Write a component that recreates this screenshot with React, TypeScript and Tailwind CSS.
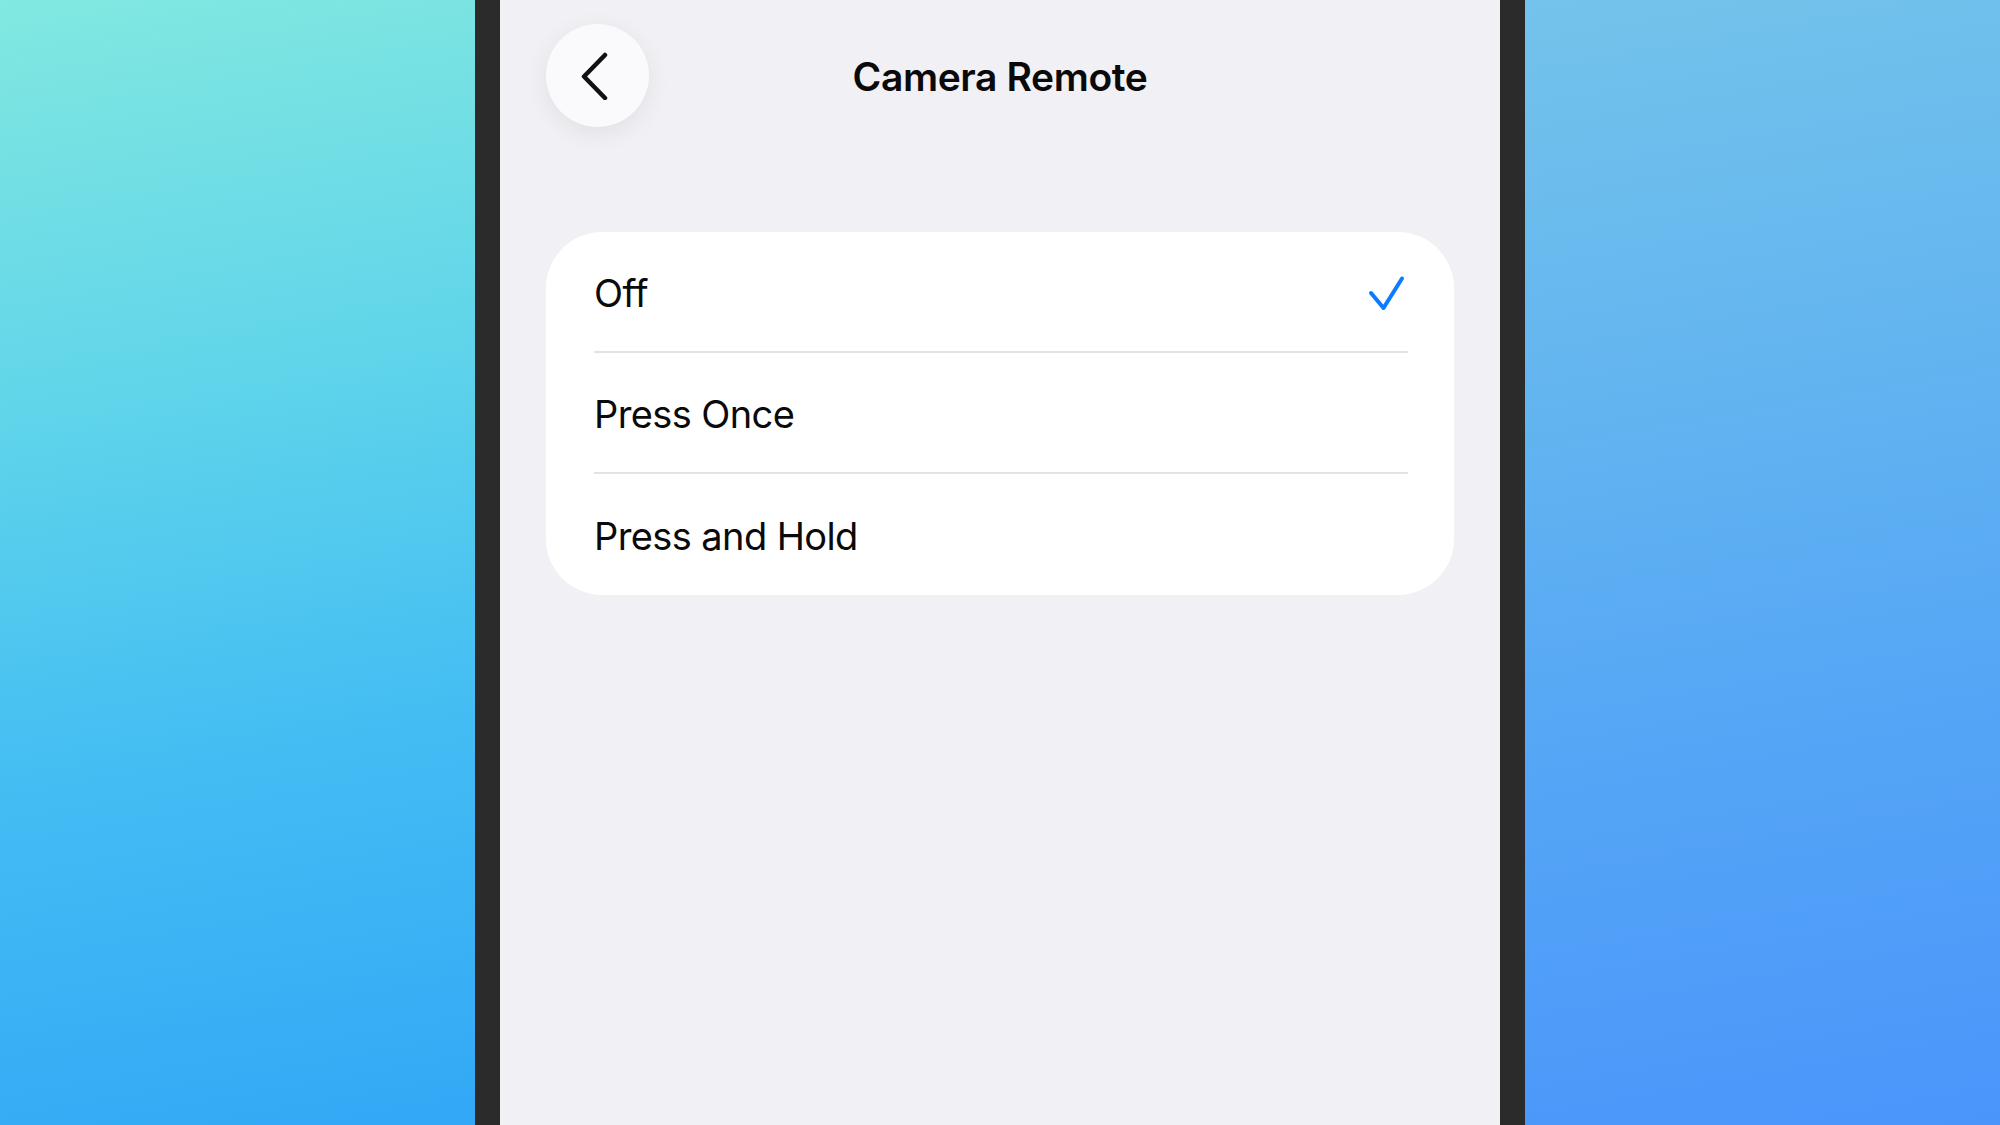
import React from "react";

const options = ["Off", "Press Once", "Press and Hold"];

function BackChevron() {
  return (
    <svg width="32" height="48" viewBox="0 0 32 48" fill="none" className="-ml-2">
      <path
        d="M27 3 L6 24.5 L27 46"
        stroke="#111"
        strokeWidth="4.5"
        strokeLinecap="round"
        strokeLinejoin="round"
      />
    </svg>
  );
}

function Check() {
  return (
    <svg width="40" height="40" viewBox="0 0 40 40" fill="none" className="mr-[2px]">
      <path
        d="M5 20 L17.5 35 L36 5.5"
        stroke="#0a7cff"
        strokeWidth="4"
        strokeLinecap="round"
        strokeLinejoin="round"
      />
    </svg>
  );
}

function OptionRow({ label, selected, last }: { label: string; selected: boolean; last: boolean }) {
  return (
    <div className="pl-[48px]">
      <div
        className={
          "mr-[46px] flex h-[121px] items-center justify-between pt-[3px] " +
          (last ? "" : "border-b-2 border-[#e3e3e6]")
        }
      >
        <span className="text-[38px] leading-none tracking-[-0.6px] text-[#0a0a0a]">{label}</span>
        {selected && <Check />}
      </div>
    </div>
  );
}

export default function App() {
  const selected = "Off";

  return (
    <div
      className="flex h-[1125px] w-[2000px] overflow-hidden"
      style={{ fontFamily: "Inter, 'Noto Sans', 'Liberation Sans', sans-serif" }}
    >
      {/* wallpaper, left side */}
      <div className="flex-1 bg-[linear-gradient(170deg,#82e8e0_0%,#5fd4ea_35%,#44bdf3_65%,#32a8f6_100%)]" />

      {/* phone */}
      <div className="w-[1050px] bg-[#2b2b2b] px-[25px]">
        <div className="h-full bg-[#f0f0f5] px-[46px] pt-[24px]">
          <div className="grid grid-cols-[103px_1fr_103px] items-center">
            <button className="flex h-[103px] w-[103px] items-center justify-center rounded-full bg-[#fafafc] shadow-[0_6px_24px_rgba(0,0,0,0.07)]">
              <BackChevron />
            </button>
            <h1 className="pt-[2px] text-center text-[39px] font-semibold leading-none tracking-[-0.4px] text-[#0a0a0a]">
              Camera Remote
            </h1>
            <div />
          </div>

          <div className="mt-[105px] overflow-hidden rounded-[56px] bg-white">
            {options.map((o, i) => (
              <OptionRow key={o} label={o} selected={o === selected} last={i === options.length - 1} />
            ))}
          </div>
        </div>
      </div>

      {/* wallpaper, right side */}
      <div className="flex-1 bg-[linear-gradient(170deg,#74c3eb_0%,#62b4f0_35%,#54a5f6_65%,#4a95fb_100%)]" />
    </div>
  );
}
